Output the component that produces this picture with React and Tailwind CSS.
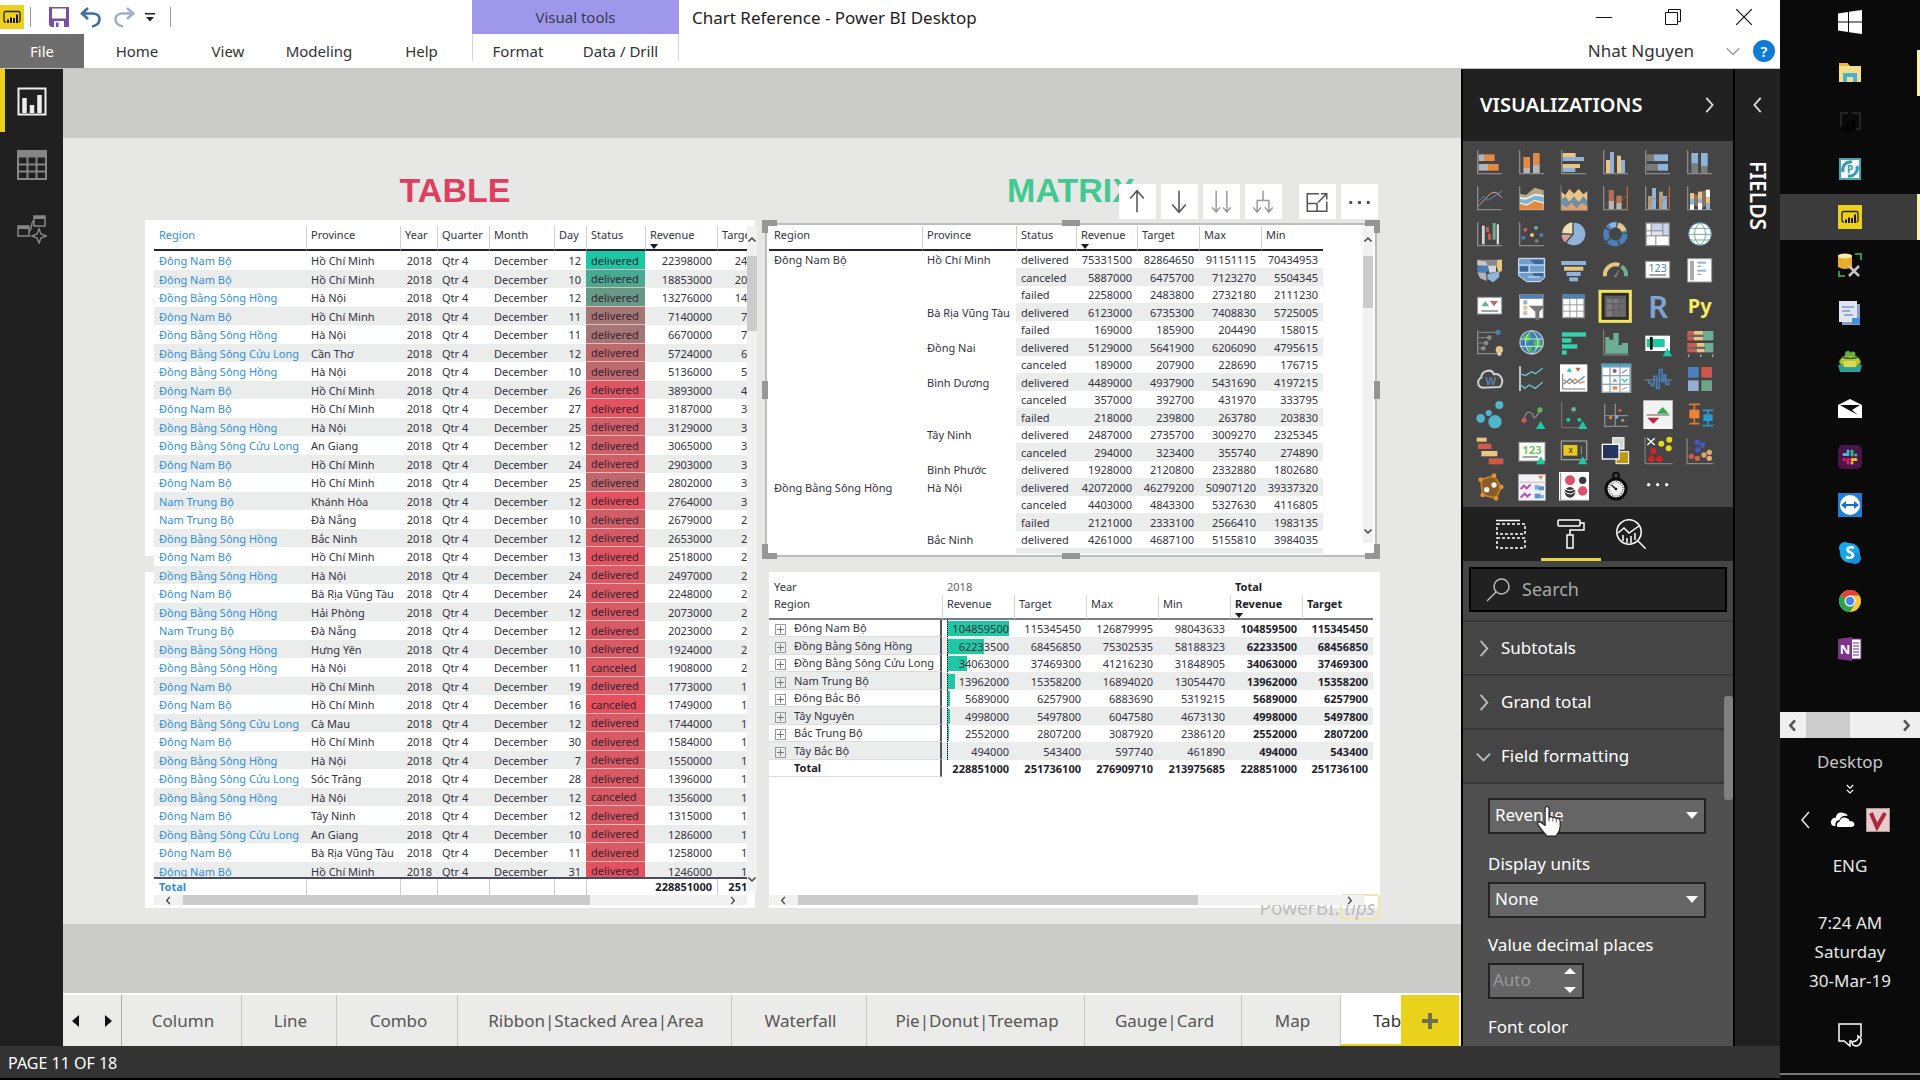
import React from "react";

/* ---------- data ---------- */

const SALES = [
  ["Đông Nam Bộ", "Hồ Chí Minh", 12, "delivered", 22398000, "#17c9a5"],
  ["Đông Nam Bộ", "Hồ Chí Minh", 10, "delivered", 18853000, "#46ab90"],
  ["Đồng Bằng Sông Hồng", "Hà Nội", 12, "delivered", 13276000, "#669a87"],
  ["Đông Nam Bộ", "Hồ Chí Minh", 11, "delivered", 7140000, "#a37775"],
  ["Đồng Bằng Sông Hồng", "Hà Nội", 11, "delivered", 6670000, "#a37775"],
  ["Đồng Bằng Sông Cửu Long", "Cần Thơ", 12, "delivered", 5724000, "#bc6a6d"],
  ["Đồng Bằng Sông Hồng", "Hà Nội", 10, "delivered", 5136000, "#bc6a6d"],
  ["Đông Nam Bộ", "Hồ Chí Minh", 26, "delivered", 3893000, "#dd5663"],
  ["Đông Nam Bộ", "Hồ Chí Minh", 27, "delivered", 3187000, "#e35360"],
  ["Đồng Bằng Sông Hồng", "Hà Nội", 25, "delivered", 3129000, "#cf5f67"],
  ["Đồng Bằng Sông Cửu Long", "An Giang", 12, "delivered", 3065000, "#cf5f67"],
  ["Đông Nam Bộ", "Hồ Chí Minh", 24, "delivered", 2903000, "#cf5f67"],
  ["Đông Nam Bộ", "Hồ Chí Minh", 25, "delivered", 2802000, "#be686c"],
  ["Nam Trung Bộ", "Khánh Hòa", 12, "delivered", 2764000, "#e4525f"],
  ["Nam Trung Bộ", "Đà Nẵng", 10, "delivered", 2679000, "#cf5f67"],
  ["Đồng Bằng Sông Hồng", "Bắc Ninh", 12, "delivered", 2653000, "#d75a64"],
  ["Đông Nam Bộ", "Hồ Chí Minh", 13, "delivered", 2518000, "#e0545f"],
  ["Đồng Bằng Sông Hồng", "Hà Nội", 24, "delivered", 2497000, "#d75a64"],
  ["Đông Nam Bộ", "Bà Rịa Vũng Tàu", 24, "delivered", 2248000, "#d75a64"],
  ["Đồng Bằng Sông Hồng", "Hải Phòng", 12, "delivered", 2073000, "#d75a64"],
  ["Nam Trung Bộ", "Đà Nẵng", 12, "delivered", 2023000, "#d75a64"],
  ["Đồng Bằng Sông Hồng", "Hưng Yên", 10, "delivered", 1924000, "#d75a64"],
  ["Đồng Bằng Sông Hồng", "Hà Nội", 11, "canceled", 1908000, "#d95a63"],
  ["Đông Nam Bộ", "Hồ Chí Minh", 19, "delivered", 1773000, "#d95a63"],
  ["Đông Nam Bộ", "Hồ Chí Minh", 16, "canceled", 1749000, "#e6505f"],
  ["Đồng Bằng Sông Cửu Long", "Cà Mau", 12, "delivered", 1744000, "#d75a64"],
  ["Đông Nam Bộ", "Hồ Chí Minh", 30, "delivered", 1584000, "#d75a64"],
  ["Đồng Bằng Sông Hồng", "Hà Nội", 7, "delivered", 1550000, "#d75a64"],
  ["Đồng Bằng Sông Cửu Long", "Sóc Trăng", 28, "delivered", 1396000, "#d95a63"],
  ["Đồng Bằng Sông Hồng", "Hà Nội", 12, "canceled", 1356000, "#d75a64"],
  ["Đông Nam Bộ", "Tây Ninh", 12, "delivered", 1315000, "#d75a64"],
  ["Đồng Bằng Sông Cửu Long", "An Giang", 10, "delivered", 1286000, "#d95a63"],
  ["Đông Nam Bộ", "Bà Rịa Vũng Tàu", 11, "delivered", 1258000, "#d95a63"],
  ["Đông Nam Bộ", "Hồ Chí Minh", 31, "delivered", 1246000, "#e35260"],
];

const MATRIX = [
  ["Đông Nam Bộ", "Hồ Chí Minh", "delivered", 75331500, 82864650, 91151115, 70434953],
  ["", "", "canceled", 5887000, 6475700, 7123270, 5504345],
  ["", "", "failed", 2258000, 2483800, 2732180, 2111230],
  ["", "Bà Rịa Vũng Tàu", "delivered", 6123000, 6735300, 7408830, 5725005],
  ["", "", "failed", 169000, 185900, 204490, 158015],
  ["", "Đồng Nai", "delivered", 5129000, 5641900, 6206090, 4795615],
  ["", "", "canceled", 189000, 207900, 228690, 176715],
  ["", "Bình Dương", "delivered", 4489000, 4937900, 5431690, 4197215],
  ["", "", "canceled", 357000, 392700, 431970, 333795],
  ["", "", "failed", 218000, 239800, 263780, 203830],
  ["", "Tây Ninh", "delivered", 2487000, 2735700, 3009270, 2325345],
  ["", "", "canceled", 294000, 323400, 355740, 274890],
  ["", "Bình Phước", "delivered", 1928000, 2120800, 2332880, 1802680],
  ["Đồng Bằng Sông Hồng", "Hà Nội", "delivered", 42072000, 46279200, 50907120, 39337320],
  ["", "", "canceled", 4403000, 4843300, 5327630, 4116805],
  ["", "", "failed", 2121000, 2333100, 2566410, 1983135],
  ["", "Bắc Ninh", "delivered", 4261000, 4687100, 5155810, 3984035],
  ["", "", "canceled", 196000, 215600, 237160, 183260],
];

const REGIONS = [
  ["Đông Nam Bộ", 104859500, 115345450, 126879995, 98043633],
  ["Đồng Bằng Sông Hồng", 62233500, 68456850, 75302535, 58188323],
  ["Đồng Bằng Sông Cửu Long", 34063000, 37469300, 41216230, 31848905],
  ["Nam Trung Bộ", 13962000, 15358200, 16894020, 13054470],
  ["Đông Bắc Bộ", 5689000, 6257900, 6883690, 5319215],
  ["Tây Nguyên", 4998000, 5497800, 6047580, 4673130],
  ["Bắc Trung Bộ", 2552000, 2807200, 3087920, 2386120],
  ["Tây Bắc Bộ", 494000, 543400, 597740, 461890],
];

const TABS = [
  ["Column", "w-[120px]"],
  ["Line", "w-[95px]"],
  ["Combo", "w-[121px]"],
  ["Ribbon|Stacked Area|Area", "w-[274px]"],
  ["Waterfall", "w-[135px]"],
  ["Pie|Donut|Treemap", "w-[218px]"],
  ["Gauge|Card", "w-[157px]"],
  ["Map", "w-[99px]"],
];

/* ---------- drawing helpers ---------- */

function Rects({ d }) {
  return d.map(([x, y, w, h, fill], i) => <rect key={i} x={x} y={y} width={w} height={h} fill={fill} />);
}
function Dots({ d }) {
  return d.map(([x, y, r, fill], i) => <circle key={i} cx={x} cy={y} r={r} fill={fill} />);
}
const Axis = ({ c = "#8a8a8a" }) => <path d="M5 4V74H78" fill="none" stroke={c} strokeWidth="4" />;
const Line = ({ d, c, w = 3 }) => <path d={d} fill="none" stroke={c} strokeWidth={w} />;

const OR = "#e08a45";
const YE = "#e8c583";
const BL = "#8fb3d9";
const GR = "#b5b5b5";
const DB = "#4a7fb8";
const TE = "#1ec9a4";
const GN = "#6fae92";
const RD = "#d05a50";

const VISUALS = [
  ["Stacked bar chart", <><Axis /><Rects d={[[8, 16, 16, 20, GR], [24, 16, 32, 20, OR], [8, 45, 28, 20, GR], [36, 45, 32, 20, OR]]} /></>],
  ["Stacked column chart", <><Axis /><Rects d={[[16, 24, 20, 33, OR], [16, 57, 20, 15, GR], [45, 12, 20, 34, OR], [45, 46, 20, 26, GR]]} /></>],
  ["Clustered bar chart", <><Axis /><Rects d={[[8, 12, 39, 12, YE], [8, 24, 64, 12, BL], [8, 45, 52, 12, YE], [8, 57, 38, 12, BL]]} /></>],
  ["Clustered column chart", <><Axis /><Rects d={[[12, 33, 12, 39, YE], [24, 9, 12, 63, BL], [45, 20, 12, 52, YE], [57, 33, 12, 39, BL]]} /></>],
  ["100% stacked bar chart", <><Axis /><Rects d={[[8, 16, 22, 20, "#7b7b7b"], [30, 16, 42, 20, BL], [8, 45, 34, 20, "#7b7b7b"], [42, 45, 30, 20, BL]]} /></>],
  ["100% stacked column chart", <><Axis /><Rects d={[[16, 12, 20, 32, BL], [16, 44, 20, 28, "#7b7b7b"], [45, 12, 20, 39, BL], [45, 51, 20, 21, "#7b7b7b"]]} /></>],

  ["Line chart", <><Axis /><Line d="M8 62 45 24 60 22 78 38" c="#e09a96" /><Line d="M8 48 22 34 36 46 78 18" c="#5b8fd0" /></>],
  ["Area chart", <><Axis /><path d="M6 26 24 30 50 8 77 16V74H6z" fill="#b5a98a" /><path d="M6 36 24 38 50 26 77 30V74H6z" fill="#e6eef0" /><path d="M6 42 24 44 50 32 77 36V74H6z" fill="#7fb2cf" /><path d="M6 52 26 58 50 44 77 52V74H6z" fill="#f0efe6" /><path d="M6 56 26 62 50 48 77 56V74H6z" fill={OR} /></>],
  ["Stacked area chart", <><path d="M4 20 16 30 28 12 42 26 56 12 70 28 82 18V50H4z" fill={YE} /><path d="M4 44 16 34 28 50 42 34 56 52 70 34 82 48V74H4z" fill="#6d8ea8" /><path d="M4 56 20 68 34 54 50 70 64 54 82 62V76H4z" fill="#e3a070" /><path d="M3 0V76H84" fill="none" stroke="#9a9a9a" strokeWidth="2" /></>],
  ["Line and stacked column chart", <><Axis /><Rects d={[[20, 15, 16, 33, "#a9735a"], [20, 48, 16, 24, GR], [43, 32, 16, 22, "#b97a55"], [43, 54, 16, 18, GR], [74, 4, 4, 70, "#b9683c"]]} /><Line d="M8 62 28 38 48 52 76 34" c="#c25a50" w={2} /></>],
  ["Line and clustered column chart", <><Axis /><Rects d={[[12, 33, 12, 39, "#b0a080"], [24, 9, 12, 63, BL], [45, 20, 12, 52, "#b0a080"], [57, 33, 12, 39, BL], [74, 4, 4, 70, "#b9683c"]]} /><Line d="M10 58 28 38 50 52 76 30" c="#c25a50" w={2} /></>],
  ["Ribbon chart", <><path d="M22 26 38 30 46 20 62 14V60L46 72 38 66 22 60z" fill="#8a7460" /><Axis /><Rects d={[[12, 24, 12, 18, YE], [12, 42, 12, 16, BL], [12, 58, 12, 16, "#fff"], [36, 20, 12, 22, YE], [36, 42, 12, 12, BL], [36, 54, 12, 20, "#fff"], [60, 14, 12, 22, "#fff"], [60, 36, 12, 20, YE], [60, 56, 12, 18, BL]]} /></>],

  ["Waterfall chart", <><Axis /><Rects d={[[18, 14, 8, 56, "#d8d8d8"], [30, 18, 9, 16, RD], [36, 38, 9, 18, RD], [50, 6, 9, 50, GN], [62, 10, 7, 60, "#d8d8d8"]]} /></>],
  ["Scatter chart", <><Axis /><Dots d={[[22, 26, 6, RD], [54, 20, 6, GN], [16, 50, 6, DB], [42, 42, 6, YE], [70, 42, 6, DB], [56, 60, 6, "#7a7a7a"]]} /></>],
  ["Pie chart", <><circle cx="42" cy="39" r="34" fill={BL} /><path d="M38 39V4A34 34 0 0 0 6 36L38 39z" fill="#f0dfb0" /><path d="M37 42 5 41A34 34 0 0 0 16 65z" fill="#e09a96" /><path d="M39 4V40L16 66M39 40 4 38" stroke="#454545" strokeWidth="4" fill="none" /></>],
  ["Donut chart", <><circle cx="40" cy="39" r="28" fill="none" stroke={DB} strokeWidth="17" strokeDasharray="31 4" /><path d="M47 12A28 28 0 0 1 66 30" fill="none" stroke={YE} strokeWidth="15" /><path d="M24 16A28 28 0 0 1 42 11" fill="none" stroke={BL} strokeWidth="15" /></>],
  ["Treemap", <><Rects d={[[4, 4, 74, 72, "#8a8a8a"], [8, 8, 12, 20, "#fff"], [23, 8, 32, 20, "#c9d4ea"], [58, 8, 16, 34, "#c9d4ea"], [8, 31, 12, 12, "#fff"], [23, 31, 32, 12, "#dfe4f0"], [8, 46, 26, 26, "#fff"], [37, 46, 37, 26, "#fff"]]} /></>],
  ["Map", <><circle cx="42" cy="39" r="34" fill="#fff" stroke="#5b94b8" strokeWidth="3" /><path d="M42 6C20 20 20 58 42 72M42 6c22 14 22 52 0 66M14 22h56M9 40h66M14 57h56" fill="none" stroke="#6fae92" strokeWidth="3" /></>],

  ["Filled map", <><path d="M4 8H78V24L60 28 40 32 4 26z" fill="#8a8a8a" /><path d="M4 10 30 14 34 26 4 24z" fill="#c9c9c9" /><path d="M64 8H78V42L68 46 62 30z" fill={YE} /><path d="M4 28 34 26 40 40 24 52 4 44z" fill={DB} /><path d="M36 26H60V44L40 48z" fill="#d5d5d5" /><path d="M4 46 30 48 32 72 12 64z" fill={GR} /><path d="M34 52 70 42V60L52 76 34 66z" fill={BL} /></>],
  ["Shape map", <><path d="M2 4H80V62L66 74H26L2 56z" fill="#6f9dcc" stroke="#dbe8f6" strokeWidth="3" /><path d="M6 28H30V44H6zM36 8H76V22H50zM40 46H76V58H50z" fill="#3d6798" /><path d="M2 24H34V46H2M34 24H80M34 46H80M30 60H66" fill="none" stroke="#dbe8f6" strokeWidth="3" /></>],
  ["Funnel", <Rects d={[[4, 12, 74, 12, BL], [12, 29, 58, 12, YE], [20, 45, 42, 12, BL], [28, 61, 26, 12, BL]]} />],
  ["Gauge", <><path d="M9 58A32 32 0 0 1 52 24" fill="none" stroke={YE} strokeWidth="12" /><path d="M58 28A32 32 0 0 1 72 58" fill="none" stroke={GN} strokeWidth="12" /><path d="M36 58 52 38 42 60z" fill="#7b7b7b" stroke="#7b7b7b" strokeWidth="2" /></>],
  ["Card", <><rect x="5" y="13" width="72" height="50" fill="#fff" stroke="#9a9a9a" strokeWidth="3" /><text x="41" y="44" textAnchor="middle" fontSize="32" fill="#4a8f9f">123</text><path d="M16 54H66" stroke="#777" strokeWidth="4" /></>],
  ["Multi-row card", <><rect x="5" y="5" width="72" height="70" fill="#fff" stroke="#9a9a9a" strokeWidth="3" /><Rects d={[[12, 12, 12, 58, "#aaa"], [34, 14, 26, 6, BL], [34, 26, 12, 4, "#aaa"], [34, 38, 26, 6, BL], [34, 50, 12, 4, "#aaa"]]} /></>],

  ["KPI", <><rect x="5" y="13" width="72" height="50" fill="#fff" stroke="#9a9a9a" strokeWidth="3" /><path d="M16 40 28 24 40 40z" fill={GN} /><path d="M42 24H66L54 40z" fill="#c8655e" /><path d="M16 54H66" stroke="#777" strokeWidth="4" /></>],
  ["Slicer", <><Rects d={[[3, 4, 74, 72, "#9a9a9a"], [6, 6, 68, 10, DB], [6, 18, 68, 56, "#fff"], [16, 22, 12, 12, BL], [16, 38, 12, 12, YE], [16, 54, 12, 12, "#e3b3b0"]]} /><path d="M32 38H82L64 56V80H52V56z" fill="#777" /></>],
  ["Table", <><Rects d={[[6, 4, 68, 72, "#9a9a9a"], [6, 4, 68, 12, DB], [10, 18, 18, 16, "#fff"], [31, 18, 18, 16, "#fff"], [52, 18, 18, 16, "#fff"], [10, 37, 18, 16, "#fff"], [31, 37, 18, 16, "#fff"], [52, 37, 18, 16, "#fff"], [10, 56, 18, 16, "#fff"], [31, 56, 18, 16, "#fff"], [52, 56, 18, 16, "#fff"]]} /></>],
  ["Matrix", <><rect x="-6" y="-5" width="91" height="90" fill="#2c2c2c" stroke="#f2e55c" strokeWidth="9" /><Rects d={[[8, 8, 64, 64, "#5f5f5f"], [14, 18, 16, 12, "#7c7c7c"], [34, 18, 16, 12, "#7c7c7c"], [54, 18, 16, 12, "#6c6c6c"], [14, 34, 16, 16, "#7c7c7c"], [34, 34, 16, 16, "#6c6c6c"], [54, 34, 16, 16, "#6c6c6c"], [14, 54, 16, 16, "#7c7c7c"], [34, 54, 16, 16, "#6c6c6c"], [54, 54, 16, 16, "#6c6c6c"]]} /></>],
  ["R script visual", <text x="42" y="74" textAnchor="middle" fontSize="94" fontWeight="600" fill="#7ea3cf">R</text>],
  ["Python visual", <text x="41" y="60" textAnchor="middle" fontSize="60" fontWeight="700" fill="#f5ec62">Py</text>],

  ["Key influencers", <><Axis /><path d="M8 10H62M8 26H40M8 42H28M8 58H20" stroke="#8a8a8a" strokeWidth="3" /><Dots d={[[66, 10, 8, DB], [40, 26, 7, "#8a8a8a"], [30, 42, 7, "#8a8a8a"], [22, 58, 7, "#8a8a8a"], [70, 62, 11, YE]]} /><rect x="65" y="72" width="10" height="8" fill="#ddd" /></>],
  ["ArcGIS Maps", <><circle cx="41" cy="40" r="35" fill="#3c7fb0" stroke="#b8bcc0" strokeWidth="4" /><path d="M16 22 34 12 40 28 24 44zM46 36 66 30 70 50 52 66zM24 58 40 50 44 70z" fill="#4fc04a" /><path d="M41 5C16 24 16 56 41 75M41 5c25 19 25 51 0 70M8 30h66M8 52h66" fill="none" stroke="#d5e6ee" strokeWidth="3" /></>],
  ["Horizontal funnel", <Rects d={[[6, 10, 72, 13, "#35d3ad"], [6, 28, 28, 13, "#35d3ad"], [6, 46, 46, 13, "#35d3ad"], [6, 64, 14, 13, "#35d3ad"]]} />],
  ["Histogram", <><path d="M10 74V24H22V32H34V12H50V48H60V42H78V74z" fill={GN} /><path d="M5 2V78H82" fill="none" stroke="#8a8a8a" strokeWidth="3" /></>],
  ["Bullet chart", <><Rects d={[[4, 20, 74, 46, "#fff"], [8, 30, 54, 24, TE], [18, 24, 8, 38, "#111"]]} /><path d="M56 82 70 56 84 82z" fill={TE} /></>],
  ["Likert chart", <><Rects d={[[4, 6, 20, 28, RD], [24, 6, 28, 28, YE], [52, 6, 30, 28, GN], [4, 42, 28, 28, RD], [32, 42, 24, 28, YE], [56, 42, 26, 28, GN], [8, 17, 44, 7, "#666"], [8, 53, 50, 7, "#666"], [6, 76, 4, 8, "#aaa"], [42, 76, 4, 8, "#aaa"], [78, 76, 4, 8, "#aaa"]]} /></>],

  ["Word cloud", <><path d="M18 68A16 16 0 0 1 16 38C16 18 46 8 54 28 72 24 88 44 72 66z" fill="none" stroke="#cfcfcf" strokeWidth="6" /><text x="44" y="60" textAnchor="middle" fontSize="34" fontWeight="700" fill="#5b7fa8">W</text></>],
  ["Sparkline trend", <><path d="M6 4V78" stroke="#ddd" strokeWidth="5" /><path d="M6 26 22 32 40 20 52 26 74 10M6 58 20 70 34 60 52 70 74 52" fill="none" stroke="#6cc0cc" strokeWidth="4" /></>],
  ["Multiple KPI", <><Rects d={[[0, -2, 82, 82, "#fff"]]} /><path d="M20 20 28 8 36 20z" fill={TE} /><path d="M46 8H62L54 20z" fill={RD} /><path d="M8 26V72H76" fill="none" stroke="#777" strokeWidth="3" /><Line d="M10 58 30 42 44 56 74 34" c="#4a94c8" w={4} /><Line d="M10 44 28 56 46 42 60 54 74 50" c={OR} w={4} /></>],
  ["Small multiples grid", <><Rects d={[[-2, -4, 90, 88, "#8fa8b8"], [-2, -4, 90, 8, "#4aa3c0"], [2, 8, 20, 22, "#fff"], [26, 8, 26, 22, "#fff"], [56, 8, 26, 22, "#fff"], [2, 34, 20, 22, "#fff"], [26, 34, 26, 22, "#fff"], [56, 34, 26, 22, "#fff"], [2, 60, 20, 20, "#fff"], [26, 60, 26, 20, "#fff"], [56, 60, 26, 20, "#fff"]]} /><circle cx="38" cy="18" r="6" fill="#8a5aa0" /><path d="M32 50 38 40 46 50z" fill={GN} /><rect x="32" y="64" width="14" height="10" fill={OR} /><Line d="M60 24 76 14" c="#8a5aa0" w={3} /><Line d="M60 42 68 50 76 42" c={TE} w={4} /><Line d="M60 74 76 66" c={OR} w={3} /></>],
  ["Waveform", <><Line d="M2 45H84" c="#8a8a8a" w={3} /><Line d="M14 45V54H22V62H30V34H38V70H46V14H54V50H60V30H66V58H74V45" c={DB} w={5} /></>],
  ["Tile grid", <Rects d={[[6, 6, 32, 32, "#4a80bd"], [46, 6, 32, 32, "#cc5648"], [6, 46, 32, 32, "#93aed2"], [46, 46, 32, 32, "#6fa58c"]]} />],

  ["Bubble chart", <Dots d={[[14, 52, 13, "#4fb6cc"], [38, 36, 9, "#4fb6cc"], [70, 12, 12, "#4fb6cc"], [57, 62, 20, "#4fb6cc"]]} />],
  ["Journey chart", <><Line d="M18 58C24 20 44 34 46 46S60 40 66 28" c="#8a8a8a" w={4} /><Dots d={[[18, 58, 8, "#cc5658"], [66, 27, 8, "#62b058"]]} /><path d="M54 84 68 60 82 84z" fill={TE} /></>],
  ["Clustering scatter", <><path d="M5 2V80H80" fill="none" stroke="#777" strokeWidth="3" /><Dots d={[[41, 25, 7, GN], [25, 56, 6, TE], [58, 56, 6, TE]]} /><path d="M54 84 68 60 82 84z" fill={TE} /></>],
  ["Quadrant chart", <><path d="M8 8V76H78M40 8V76M8 44H78" fill="none" stroke="#8a8a8a" strokeWidth="4" /><Dots d={[[26, 50, 5, OR], [54, 28, 5, RD], [44, 48, 5, BL], [62, 58, 5, "#999"]]} /></>],
  ["Variance card", <><rect x="-2" y="-2" width="88" height="86" fill="#f3f3f1" /><path d="M38 38 56 18 74 38z" fill="#3aa64a" /><path d="M10 50H46L28 68z" fill="#c0243c" /><path d="M8 42H76" stroke="#999" strokeWidth="5" /></>],
  ["Box and whisker", <><path d="M8 10H42M25 10V70M10 68H40" stroke="#e07a35" strokeWidth="5" /><rect x="10" y="26" width="30" height="26" fill="#f0833a" /><path d="M50 28H82M66 28V74M50 74H82" stroke="#2c96cc" strokeWidth="5" /><rect x="52" y="40" width="28" height="20" fill="#2c9ad0" /></>],

  ["Gantt", <Rects d={[[2, 2, 30, 12, YE], [6, 20, 40, 16, RD], [16, 42, 48, 16, YE], [38, 64, 44, 18, "#cf5a44"]]} />],
  ["Card with states", <><rect x="3" y="16" width="78" height="56" fill="#fff" stroke="#9a9a9a" strokeWidth="3" /><text x="42" y="50" textAnchor="middle" fontSize="34" fontWeight="700" fill="#71c765">123</text><path d="M14 60H60" stroke="#777" strokeWidth="4" /><path d="M54 82 68 58 82 82z" fill={TE} /></>],
  ["Box card", <><rect x="4" y="12" width="76" height="56" fill="none" stroke="#9a9a9a" strokeWidth="4" /><rect x="10" y="24" width="42" height="32" fill="#e8c91d" /><text x="32" y="49" textAnchor="middle" fontSize="24" fill="#222">x</text><path d="M64 28V52" stroke="#999" strokeWidth="3" /><path d="M54 82 68 58 82 82z" fill={TE} /></>],
  ["Layered cards", <><rect x="32" y="2" width="34" height="34" fill="#d5d5d5" stroke="#fff" strokeWidth="3" /><rect x="42" y="44" width="38" height="36" fill="#bf9716" stroke="#fff" strokeWidth="3" /><rect x="1" y="22" width="50" height="44" fill="#263560" stroke="#fff" strokeWidth="4" /></>],
  ["Cluster map", <><path d="M3 0V80H86" fill="none" stroke="#8a8a8a" strokeWidth="3" /><path d="M10 4 32 24M32 4 10 24" stroke="#fff" strokeWidth="4" /><Dots d={[[52, 20, 9, "#ead61c"], [76, 8, 9, "#ead61c"], [74, 34, 9, "#ead61c"], [28, 42, 9, "#e02020"], [22, 66, 9, "#e02020"], [46, 66, 9, "#e02020"]]} /></>],
  ["Dense scatter", <><path d="M3 4V80H82" fill="none" stroke="#999" strokeWidth="3" /><Dots d={[[34, 16, 8, "#4658c0"], [50, 24, 8, "#4658c0"], [36, 38, 8, "#4658c0"], [16, 58, 8, RD], [34, 64, 8, "#c8684a"], [54, 54, 8, "#e0a070"], [70, 46, 8, "#e3ad78"], [70, 64, 8, "#e3ad78"]]} /></>],

  ["Network graph", <><path d="M14 20 54 8 76 42 60 76 20 66z" fill="#8a5d28" stroke="#c58028" strokeWidth="5" /><Dots d={[[14, 20, 7, "#e09030"], [54, 8, 7, "#e09030"], [76, 42, 7, "#e09030"], [60, 76, 7, "#e09030"], [20, 66, 7, "#e09030"], [32, 50, 8, "#eee"], [54, 36, 8, "#eee"]]} /></>],
  ["Trend card", <><rect x="2" y="4" width="80" height="78" fill="#f2f0f5" stroke="#b8b8c0" strokeWidth="2" /><path d="M2 28H82" stroke="#aaa" strokeWidth="2" /><path d="M60 8H76L68 20z" fill={OR} /><Line d="M8 48 18 38 26 46 38 34" c="#b04ab8" w={6} /><Line d="M8 74 20 62 28 70 38 62" c="#b04ab8" w={6} /><Rects d={[[50, 36, 14, 14, "#7fb2e0"], [62, 40, 16, 12, "#5a94cc"], [50, 62, 18, 14, "#5a94cc"], [68, 66, 10, 10, "#7fb2e0"]]} /></>],
  ["Dot plot", <><rect x="-3" y="-3" width="90" height="86" fill="#fff" /><path d="M2 0V82H86" fill="none" stroke="#888" strokeWidth="3" /><Dots d={[[30, 22, 15, "#e0506a"], [68, 22, 11, "#3a3a3e"], [68, 54, 14, "#e0506a"], [30, 58, 16, "#3a3a3e"]]} /><path d="M14 46Q30 60 46 46M14 56Q30 70 46 56" stroke="#fff" strokeWidth="3" fill="none" /></>],
  ["Timer", <><circle cx="42" cy="8" r="9" fill="none" stroke="#0c0c0c" strokeWidth="6" /><circle cx="42" cy="48" r="30" fill="#f2f2f2" stroke="#0c0c0c" strokeWidth="9" /><circle cx="42" cy="48" r="21" fill="none" stroke="#333" strokeWidth="5" strokeDasharray="2 5" /><path d="M42 48 28 36" stroke="#111" strokeWidth="4" /><circle cx="42" cy="48" r="4" fill="#111" /></>],
  ["More visuals", <Dots d={[[14, 35, 5, "#fff"], [41, 35, 5, "#fff"], [68, 35, 5, "#fff"]]} />],
];

/* ---------- small shared parts ---------- */

function Chevron({ dir, className, w = 2 }) {
  const d = { up: "M3 13 10 6 17 13", down: "M3 7 10 14 17 7", left: "M13 2 6 10 13 18", right: "M7 2 14 10 7 18" }[dir];
  return (
    <svg viewBox="0 0 20 20" className={className} fill="none" stroke="currentColor" strokeWidth={w}>
      <path d={d} />
    </svg>
  );
}

function SortMark() {
  return <span className="absolute bottom-0 left-[4px] border-x-[4px] border-t-[5px] border-x-transparent border-t-[#1a1a2c]" />;
}

function HBar({ className, thumb }) {
  return (
    <div className={`flex h-[10px] items-center bg-[#f1f1f1] text-[#444] ${className}`}>
      <Chevron dir="left" className="mx-[9px] h-[9px] w-[11px]" w={3} />
      <div className={`h-full bg-[#cbcbcb] ${thumb}`} />
      <Chevron dir="right" className="mr-[9px] ml-auto h-[9px] w-[11px]" w={3} />
    </div>
  );
}

function VBar({ className, thumb }) {
  return (
    <div className={`flex flex-col items-center bg-[#f1f1f1] pt-[9px] text-[#444] ${className}`}>
      <Chevron dir="up" className="h-[10px] w-[10px]" w={3} />
      <div className={`mt-[11px] w-full bg-[#cbcbcb] ${thumb}`} />
      <Chevron dir="down" className="mt-auto mb-[7px] h-[10px] w-[10px]" w={3} />
    </div>
  );
}

/* ---------- title bar and ribbon ---------- */

function PowerBiLogo({ className }) {
  return (
    <svg viewBox="0 0 24 24" className={className}>
      <rect width="24" height="24" fill="#ecd01c" />
      <path d="M6 17H5.500Q4 17 4 15.500V8Q4 6.500 5.500 6.500H18.500Q20 6.500 20 8V15.500Q20 17 18.500 17" fill="none" stroke="#222" strokeWidth="1.300" />
      <path d="M8 18V14.500M11 18V12.500M14 18V13M17 18V9.500" stroke="#111" strokeWidth="1.900" />
    </svg>
  );
}

function TitleBar() {
  const btn = "flex h-[34px] items-center justify-center text-[15px] text-[#333]";
  return (
    <header className="flex h-[69px] shrink-0 border-b border-[#c4c4c4] bg-white">
      <div className="flex w-[472px] shrink-0 flex-col">
        <div className="flex h-[34px] items-center">
          <PowerBiLogo className="h-[24px] w-[24px]" />
          <span className="ml-[6px] h-[20px] w-px bg-[#999]" />
          <button aria-label="Save" className="ml-[18px]">
            <svg viewBox="0 0 20 20" className="h-[20px] w-[20px]"><path d="M0 0H20V20H2L0 18z" fill="#7b4fa3" /><path d="M3 1.500H17V11.500H3z" fill="#fff" /><path d="M5 14H15V20H5z" fill="#fff" /><path d="M7 15.500H9.500V20H7z" fill="#7b4fa3" /></svg>
          </button>
          <button aria-label="Undo" className="ml-[11px]">
            <svg viewBox="0 0 22 22" className="h-[22px] w-[22px]" fill="none" stroke="#3c6ea5" strokeWidth="2.600"><path d="M8 2 2 7.500 8 13M2 7.500H13Q20 8 19.500 14 19 19 12 20.500" /></svg>
          </button>
          <button aria-label="Redo" className="ml-[11px]">
            <svg viewBox="0 0 22 22" className="h-[22px] w-[22px]" fill="none" stroke="#9fb0c6" strokeWidth="2.600"><path d="M14 2 20 7.500 14 13M20 7.500H9Q2 8 2.500 14 3 19 10 20.500" /></svg>
          </button>
          <button aria-label="Customize toolbar" className="ml-[10px]">
            <svg viewBox="0 0 10 10" className="h-[10px] w-[10px]"><path d="M0 1H10V2.500H0zM1 5H9L5 9.500z" fill="#222" /></svg>
          </button>
          <span className="ml-[15px] h-[20px] w-px bg-[#999]" />
        </div>
        <nav className="flex">
          <button className="h-[34px] w-[84px] bg-[#6e6e6e] text-[15px] text-white">File</button>
          <button className={`${btn} w-[106px]`}>Home</button>
          <button className={`${btn} w-[76px]`}>View</button>
          <button className={`${btn} w-[106px]`}>Modeling</button>
          <button className={`${btn} w-[99px]`}>Help</button>
        </nav>
      </div>
      <div className="w-[207px] shrink-0">
        <div className="flex h-[34px] items-center justify-center bg-[#9f98ea] text-[15px] text-[#3a3a55]">Visual tools</div>
        <div className="flex h-[27px] border-x border-[#d5d5d5]">
          <button className={`${btn} w-[90px]`}>Format</button>
          <button className={`${btn} w-[115px]`}>Data / Drill</button>
        </div>
      </div>
      <h1 className="h-[36px] pl-[13px] text-[17px] leading-[36px] text-[#1c1c1c]">Chart Reference - Power BI Desktop</h1>
      <div className="ml-auto flex flex-col">
        <div className="flex h-[34px] items-center justify-end text-[#111]">
          <button aria-label="Minimize" className="flex w-[69px] justify-center"><svg viewBox="0 0 16 16" className="h-[16px] w-[16px]"><path d="M0 8.500H16" stroke="currentColor" /></svg></button>
          <button aria-label="Restore" className="flex w-[70px] justify-center"><svg viewBox="0 0 16 16" className="h-[16px] w-[16px]" fill="none" stroke="currentColor"><path d="M.500 3.500H12.500V15.500H.500zM3.500 3.500V.500H15.500V12.500H12.500" /></svg></button>
          <button aria-label="Close" className="flex w-[72px] justify-center"><svg viewBox="0 0 16 16" className="h-[16px] w-[16px]"><path d="M0 0 16 16M16 0 0 16" stroke="currentColor" strokeWidth="1.200" /></svg></button>
        </div>
        <div className="flex h-[34px] items-center justify-end">
          <span className="text-[17px] text-[#333]">Nhat Nguyen</span>
          <Chevron dir="down" className="ml-[30px] h-[18px] w-[18px] text-[#999]" w={1.5} />
          <button aria-label="Help" className="mr-[5px] ml-[11px] h-[22px] w-[22px] rounded-full bg-[#0f7bd4] text-[15px] leading-[22px] font-semibold text-white">?</button>
        </div>
      </div>
    </header>
  );
}

function Rail() {
  return (
    <nav className="flex w-[63px] shrink-0 flex-col bg-[#202020]">
      <button aria-label="Report" className="flex h-[63px] items-center border-l-[5px] border-[#ecd01c] pl-[12px]">
        <svg viewBox="0 0 30 30" className="h-[30px] w-[30px]" fill="none" stroke="#eee"><rect x="1.500" y="2.500" width="27" height="26" strokeWidth="2" /><path d="M7.500 27V12M15 27V19M22.500 27V9" strokeWidth="4.500" /></svg>
      </button>
      <button aria-label="Data" className="flex h-[65px] items-center pl-[17px]">
        <svg viewBox="0 0 30 30" className="h-[30px] w-[30px]" fill="none" stroke="#868686"><path d="M1 1H29V7H1z" fill="#868686" /><rect x="1" y="1" width="28" height="28" strokeWidth="2" /><path d="M1 14.500H29M1 21.500H29M10.500 7V29M19.500 7V29" strokeWidth="2" /></svg>
      </button>
      <button aria-label="Model" className="flex h-[63px] items-center pl-[17px]">
        <svg viewBox="0 0 30 30" className="h-[30px] w-[30px]" fill="none" stroke="#868686" strokeWidth="1.500"><rect x="17" y="2" width="11" height="10" /><path d="M17 3.500H28" strokeWidth="3" /><rect x="1" y="12" width="11" height="10" /><path d="M1 13.500H12" strokeWidth="3" /><path d="M12 17C16 17 13 7 17 7" /><path d="M22 15 24 20 29 22 24 24 22 29 20 24 15 22 20 20z" /></svg>
      </button>
    </nav>
  );
}

/* ---------- report visuals ---------- */

const SALES_COLS = ["w-[152px]", "w-[94px]", "w-[37px]", "w-[52px]", "w-[65px]", "w-[32px]", "w-[59px]", "w-[72px]", "w-[73px]"];

function SalesCols() {
  return <colgroup>{SALES_COLS.map((c, i) => <col key={i} className={c} />)}</colgroup>;
}

function SalesTable() {
  const head = ["Region", "Province", "Year", "Quarter", "Month", "Day", "Status", "Revenue", "Target"];
  return (
    <section className="relative h-[688px] bg-white pt-[6px] pl-[9px]">
      <div className="mr-[8px] h-[651px] overflow-hidden">
        <table className="w-[636px] table-fixed border-separate border-spacing-0 text-[11px] leading-[17px] text-[#33333d]">
          <SalesCols />
          <thead>
            <tr className="h-[25px] text-left align-top">
              {head.map((h, i) => (
                <th key={h} className={`relative border-b-2 border-b-[#22223a] font-normal whitespace-nowrap ${i === 0 ? "px-[5px] text-[#2f8fdb]" : "border-l border-l-[#cfcfcf] px-[4px]"}`}>
                  {h}
                  {h === "Revenue" && <SortMark />}
                </th>
              ))}
            </tr>
          </thead>
          <tbody>
            {SALES.map(([region, province, day, status, rev, color], i) => (
              <tr key={i} className="whitespace-nowrap odd:h-[19px] even:h-[18px] even:bg-[#ebecec]">
                <td className="px-[5px]"><a href="#region" className="text-[#2f8fdb]">{region}</a></td>
                <td className="px-[5px]">{province}</td>
                <td className="px-[5px] text-right">2018</td>
                <td className="px-[5px]">Qtr 4</td>
                <td className="px-[5px]">December</td>
                <td className="px-[5px] text-right">{day}</td>
                <td className="border-b border-[#f0b3b8] px-[5px] text-[#3a1f30]" style={{ backgroundColor: color }}>{status}</td>
                <td className="px-[5px] text-right">{rev}</td>
                <td className="px-[5px] text-right">{Math.round(rev * 1.1)}</td>
              </tr>
            ))}
          </tbody>
        </table>
      </div>
      <div className="mr-[8px] overflow-hidden border-t-2 border-[#4a4a62]">
        <table className="w-[636px] table-fixed border-separate border-spacing-0 text-[11px] leading-[16px] font-bold text-[#1d1d2a]">
          <SalesCols />
          <tbody>
            <tr className="h-[16px] text-right">
              <td className="px-[5px] text-left text-[#2f8fdb]">Total</td>
              {[1, 2, 3, 4, 5, 6].map((n) => <td key={n} className="border-l border-[#cfcfcf]" />)}
              <td className="px-[5px]">228851000</td>
              <td className="border-l border-[#cfcfcf] px-[5px]">251736100</td>
            </tr>
          </tbody>
        </table>
      </div>
      <HBar className="mr-[8px]" thumb="w-[407px]" />
      <VBar className="absolute top-[6px] -right-[2px] h-[665px] w-[10px]" thumb="h-[75px]" />
      <span className="absolute top-[336px] left-0 h-[16px] w-[9px] bg-[#e7e7e6]" />
    </section>
  );
}

const TOOLS = [
  ["Drill up", false, <path key="p" d="M18 29V7M11 15 18 7 25 15" strokeWidth="1.600" />],
  ["Drill down", false, <path key="p" d="M18 7V29M11 21 18 29 25 21" strokeWidth="1.600" />],
  ["Go to next level", true, <path key="p" d="M13 7V29M9 24 13 29 17 24M24 7V29M20 24 24 29 28 24" strokeWidth="1.500" />],
  ["Expand all down one level", true, <path key="p" d="M18 7V17M12 29V17H24V29M8 24 12 29 16 24M20 24 24 29 28 24" strokeWidth="1.500" />],
  ["Focus mode", false, <path key="p" d="M20 10H8V28H28V18M8 20H18V28M19 19 28 10M22 10H28V16" strokeWidth="1.600" />],
  ["More options", false, <path key="p" d="M8 19H11M17 19H20M26 19H29" strokeWidth="3" />],
];

function DetailMatrix() {
  const edge = "absolute bg-[#969696]";
  const head = ["Region", "Province", "Status", "Revenue", "Target", "Max", "Min"];
  const cols = ["w-[153px]", "w-[94px]", "w-[60px]", "w-[61px]", "w-[62px]", "w-[62px]", "w-[62px]"];
  return (
    <section className="relative h-[339px] pt-[3px] pr-[3px] pb-[2px] pl-[3px]">
      <div className="h-full border-[2px] border-[#bdbdbd] bg-white pt-[1px] pl-[2px]">
        <div className="h-[328px] overflow-hidden">
          <table className="w-[554px] table-fixed border-separate border-spacing-0 text-[11px] leading-[17px] text-[#33333d]">
            <colgroup>{cols.map((c, i) => <col key={i} className={c} />)}</colgroup>
            <thead>
              <tr className="h-[25px] text-left align-top">
                {head.map((h, i) => (
                  <th key={h} className={`relative border-b-2 border-b-[#22223a] font-normal ${i ? "border-l border-l-[#cfcfcf] px-[4px]" : "px-[5px]"}`}>
                    {h}
                    {h === "Revenue" && <SortMark />}
                  </th>
                ))}
              </tr>
            </thead>
            <tbody>
              {MATRIX.map((r, i) => (
                <tr key={i} className="group whitespace-nowrap odd:h-[17px] even:h-[18px]">
                  <td className="px-[5px]">{r[0]}</td>
                  <td className="px-[5px]">{r[1]}</td>
                  <td className="px-[5px] group-even:bg-[#ebecec]">{r[2]}</td>
                  {r.slice(3).map((v, j) => <td key={j} className="px-[5px] text-right group-even:bg-[#ebecec]">{v}</td>)}
                </tr>
              ))}
            </tbody>
          </table>
        </div>
      </div>
      <VBar className="absolute top-[6px] right-[7px] h-[317px] w-[10px]" thumb="h-[52px]" />
      <span className={`${edge} top-0 left-0 h-[6px] w-[15px]`} /><span className={`${edge} top-0 left-0 h-[13px] w-[6px]`} />
      <span className={`${edge} top-0 right-0 h-[6px] w-[15px]`} /><span className={`${edge} top-0 right-0 h-[13px] w-[6px]`} />
      <span className={`${edge} bottom-0 left-0 h-[6px] w-[15px]`} /><span className={`${edge} bottom-0 left-0 h-[15px] w-[6px]`} />
      <span className={`${edge} right-0 bottom-0 h-[6px] w-[15px]`} /><span className={`${edge} right-0 bottom-0 h-[15px] w-[6px]`} />
      <span className={`${edge} top-0 left-1/2 -ml-[9px] h-[6px] w-[18px]`} /><span className={`${edge} bottom-0 left-1/2 -ml-[9px] h-[6px] w-[18px]`} />
      <span className={`${edge} top-1/2 left-0 -mt-[9px] h-[18px] w-[6px]`} /><span className={`${edge} top-1/2 right-0 -mt-[9px] h-[18px] w-[6px]`} />
      <div className="absolute right-[2px] bottom-full mb-px flex gap-[5px]">
        {TOOLS.map(([label, faded, icon]) => (
          <button key={label} aria-label={label} className={`h-[35px] w-[37px] bg-white ${label === "Focus mode" ? "ml-[12px]" : ""}`}>
            <svg viewBox="0 0 37 36" className={`h-full w-full ${faded ? "opacity-60" : ""}`} fill="none" stroke="#555">{icon}</svg>
          </button>
        ))}
      </div>
    </section>
  );
}

function SummaryMatrix() {
  const cols = ["w-[173px]", "w-[72px]", "w-[72px]", "w-[72px]", "w-[72px]", "w-[72px]", "w-[71px]"];
  const head = ["Revenue", "Target", "Max", "Min", "Revenue", "Target"];
  const max = REGIONS[0][1];
  return (
    <section className="relative mt-[13px] ml-[7px] flex h-[336px] flex-col bg-white pt-[5px]">
      <table className="w-[604px] table-fixed border-separate border-spacing-0 text-[11px] leading-[17px] text-[#33333d]">
        <colgroup>{cols.map((c, i) => <col key={i} className={c} />)}</colgroup>
        <thead>
          <tr className="h-[18px] text-left">
            <th className="px-[5px] font-normal">Year</th>
            <th colSpan={4} className="px-[5px] font-normal text-[#666]">2018</th>
            <th colSpan={2} className="px-[5px] font-bold text-[#1d1d2a]">Total</th>
          </tr>
          <tr className="h-[25px] text-left align-top">
            <th className="border-b-2 border-b-[#7b7b8c] px-[5px] font-normal">Region</th>
            {head.map((h, i) => (
              <th key={i} className={`relative border-b-2 border-l border-b-[#7b7b8c] border-l-[#d5d5d5] px-[4px] ${i > 3 ? "font-bold text-[#1d1d2a]" : "font-normal"}`}>
                {h}
                {i === 4 && <SortMark />}
              </th>
            ))}
          </tr>
        </thead>
        <tbody>
          {REGIONS.map(([name, rev, target, mx, mn]) => (
            <tr key={name} className="whitespace-nowrap odd:h-[17px] even:h-[18px] even:bg-[#ebecec]">
              <td className="border-r-2 border-b border-r-[#55556b] border-b-[#dcdcdc] pl-[6px]">
                <div className="flex items-center">
                  <button aria-label={`Expand ${name}`} className="mt-[3px] flex h-[11px] w-[11px] items-center justify-center border border-[#999]">
                    <svg viewBox="0 0 7 7" className="h-[7px] w-[7px]"><path d="M0 3.500H7M3.500 0V7" stroke="#777" /></svg>
                  </button>
                  <span className="ml-[8px] leading-[16px]">{name}</span>
                </div>
              </td>
              <td className="px-[5px]">
                <div className="relative text-right leading-[17px]">
                  <span className="absolute top-[1px] left-0 h-[15px] bg-[#1fc8a4]" style={{ width: `${(rev / max) * 100}%` }} />
                  <span className="absolute inset-y-0 left-0 border-l border-dotted border-black" />
                  <span className="relative">{rev}</span>
                </div>
              </td>
              <td className="px-[5px] text-right">{target}</td>
              <td className="px-[5px] text-right">{mx}</td>
              <td className="px-[5px] text-right">{mn}</td>
              <td className="px-[5px] text-right font-bold text-[#1d1d2a]">{rev}</td>
              <td className="px-[5px] text-right font-bold text-[#1d1d2a]">{target}</td>
            </tr>
          ))}
          <tr className="h-[17px] text-right font-bold text-[#1d1d2a]">
            <td className="border-r-2 border-b border-r-[#55556b] border-b-[#dcdcdc] pl-[25px] text-left leading-[16px]">Total</td>
            {[228851000, 251736100, 276909710, 213975685, 228851000, 251736100].map((v, i) => <td key={i} className="px-[5px]">{v}</td>)}
          </tr>
        </tbody>
      </table>
      <div className="absolute right-0 -bottom-[12px] flex items-end text-[19px] leading-[24px] text-[#bdbdbd]">
        <span>PowerBI.</span>
        <span className="h-[26px] rounded-[4px] border-2 border-[#f1e6a8] px-[3px] italic">tips</span>
      </div>
      <HBar className="relative mt-auto mr-[16px] mb-[3px]" thumb="w-[400px]" />
    </section>
  );
}

function PageTabs() {
  return (
    <nav className="flex h-[53px] shrink-0 border-t-2 border-white bg-[#ebebe9] text-[17px] text-[#555]">
      <div className="flex w-[59px] items-center justify-between border-r border-[#aaa] px-[9px]">
        <button aria-label="Previous pages"><svg viewBox="0 0 8 12" className="h-[12px] w-[8px]"><path d="M7 0V12L0 6z" fill="#111" /></svg></button>
        <button aria-label="Next pages"><svg viewBox="0 0 8 12" className="h-[12px] w-[8px]"><path d="M1 0V12L8 6z" fill="#111" /></svg></button>
      </div>
      {TABS.map(([label, w]) => (
        <button key={label} className={`${w} border-r border-[#c6c6c6] pl-[3px] whitespace-nowrap`}>{label}</button>
      ))}
      <button className="w-[60px] overflow-hidden border-b-2 border-[#ecd01c] bg-white pt-[2px] pl-[32px] text-left text-[#333]">Tab</button>
      <button aria-label="New page" className="flex w-[58px] items-center justify-center bg-[#ead11c]">
        <svg viewBox="0 0 16 16" className="h-[16px] w-[16px]"><path d="M8 0V16M0 8H16" stroke="#707050" strokeWidth="4" /></svg>
      </button>
    </nav>
  );
}

function Report() {
  return (
    <main className="flex min-w-0 flex-1 flex-col">
      <div className="flex-1 bg-[#cbcbca] pt-[69px] pb-[69px]">
        <div className="grid h-full grid-cols-[minmax(0,610fr)_minmax(0,618fr)] gap-x-[7px] bg-[#e7e7e6] pr-[81px] pl-[82px]">
          <div>
            <h2 className="h-[82px] pt-[35px] pl-[10px] text-center font-['Liberation_Sans',sans-serif] text-[34px] leading-[34px] font-bold text-[#df3f5e]">TABLE</h2>
            <SalesTable />
          </div>
          <div>
            <h2 className="h-[82px] pt-[35px] text-center font-['Liberation_Sans',sans-serif] text-[34px] leading-[34px] font-bold text-[#42c992]">MATRIX</h2>
            <DetailMatrix />
            <SummaryMatrix />
          </div>
        </div>
      </div>
      <PageTabs />
    </main>
  );
}

/* ---------- right panes ---------- */

function Dropdown({ id, value, children }) {
  return (
    <div className="relative">
      <select id={id} aria-label={value} className="h-[36px] w-full appearance-none border-2 border-[#222] bg-[#656565] px-[5px] pb-[3px] text-[17px] text-white" defaultValue={value}>
        <option>{value}</option>
      </select>
      <span className="absolute top-[14px] right-[8px] border-x-[6px] border-t-[7px] border-x-transparent border-t-white" />
      {children}
    </div>
  );
}

function Visualizations() {
  return (
    <aside className="flex w-[274px] shrink-0 flex-col border-x-2 border-black bg-[#454545] text-white">
      <div className="flex h-[72px] shrink-0 items-center bg-[#212121] pr-[15px] pl-[17px]">
        <h2 className="text-[20px] font-semibold">VISUALIZATIONS</h2>
        <button aria-label="Collapse" className="ml-auto"><Chevron dir="right" className="h-[20px] w-[18px] text-[#ddd]" /></button>
      </div>
      <div className="grid h-[366px] shrink-0 grid-cols-6 content-start pt-[3px] pr-[5px] pl-[13px]">
        {VISUALS.map(([label, art]) => (
          <button key={label} aria-label={label} className="flex h-[36px] w-[42px] items-center">
            <svg viewBox="0 0 78 78" className="h-[26px] w-[26px] overflow-visible">{art}</svg>
          </button>
        ))}
      </div>
      <div className="flex h-[54px] shrink-0 bg-[#212121] pl-[18px]">
        <button aria-label="Fields" className="flex w-[60px] items-center justify-center">
          <svg viewBox="0 0 30 30" className="h-[30px] w-[30px]" fill="none" stroke="#fff" strokeWidth="1.500"><path d="M0 1.500H24" /><rect x="1" y="5" width="28" height="10" strokeDasharray="3 2" /><rect x="1" y="19" width="28" height="10" strokeDasharray="3 2" /></svg>
        </button>
        <button aria-label="Format" className="flex w-[60px] items-center justify-center border-b-[3px] border-[#ead33c] pt-[3px]">
          <svg viewBox="0 0 30 30" className="h-[30px] w-[30px]" fill="none" stroke="#fff" strokeWidth="1.500"><rect x="2" y="1" width="22" height="6" rx="1" /><path d="M24 4H28V11H14V16" /><rect x="11" y="16" width="6" height="13" /></svg>
        </button>
        <button aria-label="Analytics" className="flex w-[60px] items-center justify-center">
          <svg viewBox="0 0 30 30" className="h-[30px] w-[30px]" fill="none" stroke="#fff" strokeWidth="1.500"><circle cx="13" cy="13" r="12.200" /><path d="M22 22 30 30M2 14 8 9 13 14 23 7M7 22V16M11 24V19M15 24V17M19 21V14" /></svg>
        </button>
      </div>
      <div className="shrink-0 border-b-2 border-[#383838] px-[6px] pt-[6px] pb-[8px]">
        <label className="flex h-[45px] items-center border-2 border-black bg-[#212121] pl-[15px]">
          <svg viewBox="0 0 24 24" className="h-[24px] w-[24px]" fill="none" stroke="#bbb" strokeWidth="1.500"><circle cx="15.500" cy="8.500" r="7.500" /><path d="M10 14 1 23" /></svg>
          <input type="search" aria-label="Search" placeholder="Search" className="ml-[12px] min-w-0 flex-1 bg-transparent text-[18px] outline-none placeholder:text-[#a8a8a8]" />
        </label>
      </div>
      <div className="relative min-h-0 flex-1 overflow-hidden bg-[#505050]">
        {[["Subtotals", "right"], ["Grand total", "right"], ["Field formatting", "down"]].map(([label, dir]) => (
          <button key={label} className="flex h-[54px] w-full items-center border-b-2 border-[#383838] bg-[#454545] text-[17px]">
            <Chevron dir={dir} className="mr-[8px] ml-[11px] h-[19px] w-[19px] text-[#bbb]" />
            {label}
          </button>
        ))}
        <div className="w-[243px] pt-[14px] pl-[25px] text-[17px] leading-[24px]">
          <Dropdown id="field" value="Revenue">
            <svg viewBox="0 0 26 34" className="absolute top-[7px] left-[48px] h-[33px] w-[26px]"><path d="M9 3Q11 0 13 3V13Q15 11 17 13 19 11.500 20.500 14 23 12.500 24.500 16V22Q24 28 20 32H11Q7 28 2 21 0 17 4 17.500L9 21z" fill="#fff" stroke="#222" strokeWidth="1.200" /><path d="M13 12V17M17 13V17M20.500 14V18" stroke="#555" /></svg>
          </Dropdown>
          <label htmlFor="units" className="mt-[18px] mb-[6px] block">Display units</label>
          <Dropdown id="units" value="None" />
          <label htmlFor="decimals" className="mt-[15px] mb-[6px] block">Value decimal places</label>
          <div className="flex h-[36px] w-[96px] border-2 border-[#222] bg-[#656565]">
            <input id="decimals" placeholder="Auto" className="w-[68px] bg-transparent px-[3px] pb-[2px] text-[17px] outline-none placeholder:text-[#999]" />
            <div className="flex flex-col justify-between pt-[3px] pb-[4px] pl-[6px]">
              <button aria-label="Increase" className="border-x-[6px] border-b-[6px] border-x-transparent border-b-white" />
              <button aria-label="Decrease" className="border-x-[6px] border-t-[6px] border-x-transparent border-t-white" />
            </div>
          </div>
          <p className="mt-[16px]">Font color</p>
        </div>
        <span className="absolute top-[74px] right-0 h-[104px] w-[9px] rounded-[3px] bg-[#808080]" />
      </div>
    </aside>
  );
}

function FieldsPane() {
  return (
    <aside className="flex w-[45px] shrink-0 flex-col items-center bg-[#212121] text-white">
      <button aria-label="Expand fields" className="flex h-[72px] items-center"><Chevron dir="left" className="h-[20px] w-[18px] text-[#ddd]" /></button>
      <h2 className="mt-[20px] text-[21px] leading-[24px] font-semibold [writing-mode:vertical-rl]">FIELDS</h2>
    </aside>
  );
}

/* ---------- desktop taskbar ---------- */

const APPS = [
  ["File Explorer", <g key="a"><path d="M1 3H10L12 5H23V21H1z" fill="#f6dd88" /><path d="M1 2H10V5H1z" fill="#e6b93c" /><path d="M5 12H19V21H15V16H9V21H5z" fill="#45b3d6" /></g>],
  ["Report Builder", <g key="a" fill="none" stroke="#242424" strokeWidth="2"><path d="M3 18V4H10M14 4H22V20H18" /><path d="M5 22V17M10 22V14M15 22V11" stroke="#000" strokeWidth="3" /></g>],
  ["Publisher", <g key="a"><rect x="1" y="1" width="22" height="22" fill="#4aa3b5" /><rect x="3" y="3" width="18" height="18" fill="#f4fafb" /><path d="M5 15A8 8 0 0 1 14 5M19 9A8 8 0 0 1 10 19" fill="none" stroke="#3c98ac" strokeWidth="3" /><text x="12" y="16" textAnchor="middle" fontSize="10" fontWeight="700" fill="#3c98ac">P</text></g>],
  ["Power BI Desktop", null],
  ["SQL tools", <g key="a"><path d="M0 3Q7-1 14 3V14Q7 18 0 14z" fill="#e8ac2c" /><ellipse cx="7" cy="3" rx="7" ry="2.500" fill="#fbe9b0" /><path d="M17 1H23V7M1 18V23H7" fill="none" stroke="#3f8a46" strokeWidth="2" /><path d="M11 13 21 23M21 13 11 23" stroke="#c5c5c5" strokeWidth="2.500" /></g>],
  ["Scripts", <g key="a"><path d="M4 3H22V24H4z" fill="#8e9cc2" /><path d="M1 0H19V21H1z" fill="#dfe5f5" /><path d="M4 6H16M4 10H12M6 14H15" stroke="#8595c0" strokeWidth="1.500" /><path d="M14 17H22V23H14z" fill="#3f8fe0" /></g>],
  ["Toad", <g key="a"><path d="M0 16H24L22 23H2z" fill="#2b9d9a" /><ellipse cx="12" cy="13" rx="11" ry="6" fill="#5ea63c" /><path d="M4 8Q12 3 20 8L22 13 18 17H6L2 13z" fill="#b3c53c" /><circle cx="10" cy="5" r="3" fill="#63b043" /><circle cx="15" cy="5" r="2.500" fill="#63b043" /><path d="M6 12H18V18H6z" fill="#dcd85a" /><path d="M4 8Q12 11 20 8" stroke="#2e6a2a" strokeWidth="1.500" fill="none" /></g>],
  ["Mail", <g key="a"><path d="M0 8 12 2 24 8V21H0z" fill="#fff" /><path d="M2 8H22L14 13 20 18 7 11z" fill="#0a0a0a" /></g>],
  ["Slack", <g key="a" strokeWidth="3" strokeLinecap="round"><rect width="24" height="24" rx="5" fill="#4a154b" stroke="none" /><path d="M6 9.500H10M10 6V6.500" stroke="#44bede" /><path d="M14 6V10M18 10H17.500" stroke="#2eb67d" /><path d="M18 14.500H14M14 18V17.500" stroke="#ecb22e" /><path d="M10 18V14.500M6 14.500H6.500" stroke="#e01e5a" /></g>],
  ["TeamViewer", <g key="a"><rect width="24" height="24" fill="#1f7fd6" /><circle cx="12" cy="12" r="10" fill="#fff" /><path d="M3 12 8 8V11H16V8L21 12 16 16V13H8V16z" fill="#1f6fc0" /></g>],
  ["Skype", <g key="a"><circle cx="12" cy="12" r="10" fill="#18a8e8" /><circle cx="7" cy="7" r="6" fill="#18a8e8" /><circle cx="17" cy="17" r="6" fill="#1590dd" /><text x="12" y="18" textAnchor="middle" fontSize="17" fontWeight="700" fill="#fff">S</text></g>],
  ["Chrome", <g key="a"><circle cx="12" cy="12" r="11" fill="#f8c934" /><path d="M12 12 2.500 6.500A11 11 0 0 1 21.500 6.500H12z" fill="#db4437" /><path d="M12 12 2.500 6.500A11 11 0 0 0 12 23L17 14.500z" fill="#2da14e" /><circle cx="12" cy="12" r="5.500" fill="#fff" /><circle cx="12" cy="12" r="4.200" fill="#4a83ee" /></g>],
  ["OneNote", <g key="a"><path d="M12 2H23V22H12z" fill="#fff" stroke="#6d2c78" /><path d="M15 6H21M15 9H21M15 12H21M15 15H21M15 18H21" stroke="#6d2c78" strokeWidth="1.200" /><path d="M0 2 14 0V24L0 22z" fill="#7d3488" /><text x="7" y="17" textAnchor="middle" fontSize="13" fontWeight="700" fill="#fff">N</text></g>],
];

function Taskbar() {
  return (
    <aside className="flex w-[140px] shrink-0 flex-col bg-[#0a0a0a] text-[17px] text-[#e8e8e8]">
      <button aria-label="Start" className="flex h-[44px] items-center justify-center">
        <svg viewBox="0 0 24 24" className="h-[24px] w-[24px]"><path d="M0 3.500 10 2V11.500H0zM11 1.800 24 0V11.500H11zM0 12.500H10V22L0 20.500zM11 12.500H24V24L11 22.200z" fill="#fff" /></svg>
      </button>
      <nav className="mt-[6px] flex flex-col gap-[2px]">
        {APPS.map(([label, art], i) => (
          <button key={label} aria-label={label} className={`flex h-[46px] items-center justify-center border-r-[3px] pl-[3px] ${i === 3 ? "border-[#fdf39a] bg-[#3b3b3b]" : i === 0 ? "border-[#fdf39a]" : "border-transparent"}`}>
            {art ? <svg viewBox="0 0 24 24" className="h-[24px] w-[24px]">{art}</svg> : <PowerBiLogo className="h-[24px] w-[24px]" />}
          </button>
        ))}
      </nav>
      <div className="mt-[40px] flex h-[26px] shrink-0 items-center bg-[#efefef] text-[#555]">
        <Chevron dir="left" className="mx-[5px] h-[13px] w-[16px]" w={4} />
        <div className="h-full w-[44px] bg-[#cccccc]" />
        <Chevron dir="right" className="mr-[6px] ml-auto h-[13px] w-[16px]" w={4} />
      </div>
      <p className="mt-[12px] text-center leading-[24px] text-[#c8c8c8]">Desktop</p>
      <svg viewBox="0 0 10 12" className="mx-auto mt-[9px] h-[12px] w-[8px]" fill="none" stroke="#fff" strokeWidth="1.500"><path d="M1 1 5 5 9 1M1 7 5 11 9 7" /></svg>
      <div className="mt-[13px] flex h-[24px] items-center">
        <Chevron dir="left" className="ml-[16px] h-[20px] w-[20px]" w={1.5} />
        <svg viewBox="0 0 24 16" className="ml-[14px] h-[16px] w-[25px]" fill="#fff"><path d="M3 14Q-1 12 1 8 3 5 5 6 7-1 13 1 17 2 17 4 11 3 9 8 4 9 5 14z" /><path d="M7 15Q5 11 9 9.500 11 4 16 6 19 7 19 9 24 9 24 13 23 15 21 15z" /></svg>
        <svg viewBox="0 0 24 24" className="ml-[11px] h-[24px] w-[24px]"><rect width="24" height="24" fill="#eac9cd" stroke="#a98" strokeWidth="2" /><path d="M5 5 11 19 19 5" fill="none" stroke="#a82a3c" strokeWidth="4" /></svg>
      </div>
      <p className="mt-[22px] text-center leading-[24px]">ENG</p>
      <p className="mt-[30px] text-center leading-[29px]">7:24 AM<br />Saturday<br />30-Mar-19</p>
      <button aria-label="Notifications" className="mx-auto mt-[28px]">
        <svg viewBox="0 0 24 24" className="h-[24px] w-[24px]" fill="none" stroke="#fff" strokeWidth="1.500"><path d="M14 18H12V23L6 18H1V1H23V14" /><path d="M20 13Q21 18 14 19 14 23 19 23 24 21 23 16 22 14 20 13z" /></svg>
      </button>
      <div className="mt-auto mb-[5px] h-[2px] bg-[#777]" />
    </aside>
  );
}

export default function App() {
  return (
    <div className="flex h-screen overflow-hidden bg-black font-['Noto_Sans',sans-serif]">
      <div className="flex min-w-0 flex-1 flex-col">
        <TitleBar />
        <div className="flex min-h-0 flex-1">
          <Rail />
          <Report />
          <Visualizations />
          <FieldsPane />
        </div>
        <footer className="mb-[2px] h-[32px] shrink-0 bg-[#333] pl-[8px] text-[16px] leading-[34px] text-white">PAGE 11 OF 18</footer>
      </div>
      <Taskbar />
    </div>
  );
}
